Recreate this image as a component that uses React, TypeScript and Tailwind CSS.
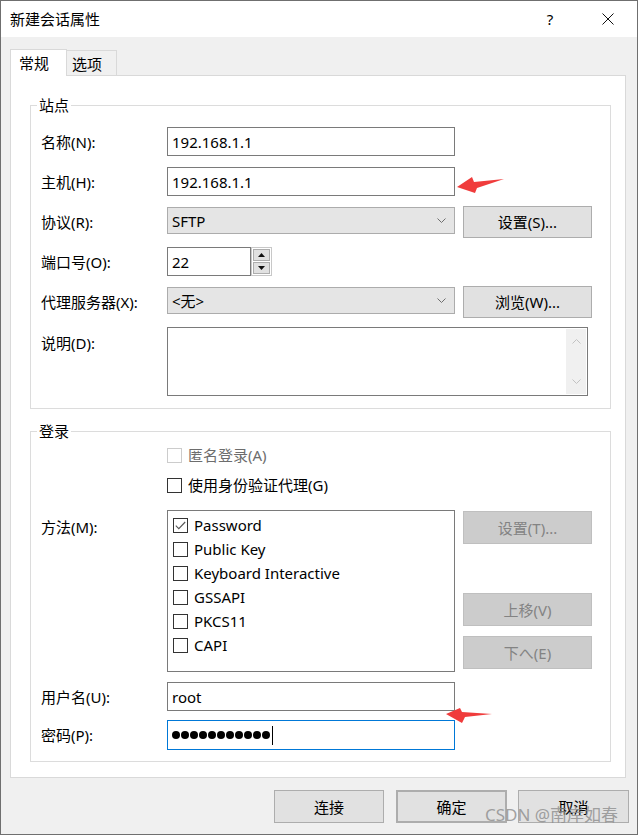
import React from 'react';

type BoxProps = { className?: string; children?: React.ReactNode };

const FieldLabel = ({ children, className = '' }: BoxProps) => (
  <div className={`w-[126px] shrink-0 ${className}`}>{children}</div>
);

const TextBox = ({ value, className = '' }: { value?: string; className?: string }) => (
  <div className={`w-[288px] h-[29px] border border-[#7a7a7a] bg-white flex items-center pl-[4px] ${className}`}>
    {value}
  </div>
);

const Chevron = ({ up = false, color = '#6e6e6e' }: { up?: boolean; color?: string }) => (
  <svg width="9" height="5" viewBox="0 0 9 5" className="block">
    <polyline
      points={up ? '0.5,4.5 4.5,0.5 8.5,4.5' : '0.5,0.5 4.5,4.5 8.5,0.5'}
      fill="none"
      stroke={color}
      strokeWidth="1"
    />
  </svg>
);

const ComboBox = ({ value }: { value: string }) => (
  <div className="self-start mt-[1px] w-[288px] h-[27px] border border-[#acacac] bg-[#e5e5e5] flex items-center pl-[4px] pr-[8px]">
    <span className="flex-1">{value}</span>
    <Chevron />
  </div>
);

const Button = ({
  children,
  className = '',
  disabled = false,
}: BoxProps & { disabled?: boolean }) => (
  <div
    className={`flex items-center justify-center border ${
      disabled ? 'bg-[#cccccc] border-[#bfbfbf] text-[#838383]' : 'bg-[#e1e1e1] border-[#adadad]'
    } ${className}`}
  >
    {children}
  </div>
);

const CheckBox = ({ checked = false, disabled = false }: { checked?: boolean; disabled?: boolean }) => (
  <div
    className={`w-[15px] h-[15px] shrink-0 border bg-white flex items-center justify-center ${
      disabled ? 'border-[#cccccc]' : 'border-[#333333]'
    }`}
  >
    {checked && (
      <svg width="11" height="9" viewBox="0 0 11 9">
        <polyline points="0.8,4.6 3.8,7.6 10.2,1" fill="none" stroke="#555555" strokeWidth="1.1" />
      </svg>
    )}
  </div>
);

const GroupBox = ({ title, children, className = '' }: BoxProps & { title: string }) => (
  <div className={`relative ml-[19px] w-[581px] border border-[#dcdcdc] pl-[10px] ${className}`}>
    <span className="absolute left-[6px] top-[-11px] px-[2px] bg-white">{title}</span>
    {children}
  </div>
);

const SpinArrow = ({ up }: { up?: boolean }) => (
  <svg width="7" height="4" viewBox="0 0 7 4">
    <polygon points={up ? '0,4 3.5,0 7,4' : '0,0 3.5,4 7,0'} fill="#111111" />
  </svg>
);

const methods = [
  { name: 'Password', checked: true },
  { name: 'Public Key', checked: false },
  { name: 'Keyboard Interactive', checked: false },
  { name: 'GSSAPI', checked: false },
  { name: 'PKCS11', checked: false },
  { name: 'CAPI', checked: false },
];

export default function App() {
  return (
    <div className="relative w-[638px] h-[835px] font-['Noto_Sans','Noto_Sans_CJK_SC',sans-serif] text-[15px] leading-[20px] text-black">
      <div className="h-full border border-[#6f6f6f] bg-[#f0f0f0] flex flex-col">
        {/* title bar */}
        <div className="h-[36px] shrink-0 bg-white flex items-center pl-[9px]">
          <span className="flex-1">新建会话属性</span>
          <div className="w-[46px] h-full flex items-center justify-center">?</div>
          <div className="w-[46px] h-full ml-[12px] mr-[6px] flex items-center justify-center">
            <svg width="12" height="12" viewBox="0 0 12 12">
              <path d="M0.5 0.5 L11.5 11.5 M11.5 0.5 L0.5 11.5" stroke="#111111" strokeWidth="1" />
            </svg>
          </div>
        </div>

        {/* tabs */}
        <div className="pt-[12px] pl-[9px] flex items-end h-[38px] shrink-0">
          <div className="relative z-10 w-[57px] h-[27px] mb-[-1px] bg-white border border-b-0 border-[#d9d9d9] flex items-center pl-[8px]">
            常规
          </div>
          <div className="w-[50px] h-[25px] border-t border-r border-[#d9d9d9] flex items-center pl-[5px] pt-[1px]">
            选项
          </div>
        </div>

        {/* tab page */}
        <div className="ml-[9px] w-[616px] h-[703px] shrink-0 bg-white border border-[#d9d9d9] pt-[29px]">
          <GroupBox title="站点" className="pt-[21px] pb-[12px]">
            <div className="flex items-center h-[29px] mb-[11px]">
              <FieldLabel>名称(N):</FieldLabel>
              <TextBox value="192.168.1.1" />
            </div>
            <div className="flex items-center h-[29px] mb-[10px]">
              <FieldLabel>主机(H):</FieldLabel>
              <TextBox value="192.168.1.1" />
            </div>
            <div className="flex items-center h-[32px] mb-[9px]">
              <FieldLabel>协议(R):</FieldLabel>
              <ComboBox value="SFTP" />
              <Button className="ml-[8px] w-[129px] h-[32px]">设置(S)...</Button>
            </div>
            <div className="flex items-center h-[29px] mb-[10px]">
              <FieldLabel>端口号(O):</FieldLabel>
              <div className="w-[84px] h-[29px] border border-[#7a7a7a] bg-white flex items-center pl-[4px]">22</div>
              <div className="w-[21px] h-[29px] border border-[#c8c8c8] bg-white flex flex-col p-[1px] gap-[1px]">
                <div className="flex-1 bg-[#e1e1e1] border border-[#adadad] flex items-center justify-center">
                  <SpinArrow up />
                </div>
                <div className="flex-1 bg-[#e1e1e1] border border-[#adadad] flex items-center justify-center">
                  <SpinArrow />
                </div>
              </div>
            </div>
            <div className="flex items-center h-[32px] mb-[9px]">
              <FieldLabel>代理服务器(X):</FieldLabel>
              <ComboBox value="<无>" />
              <Button className="ml-[8px] w-[129px] h-[32px]">浏览(W)...</Button>
            </div>
            <div className="flex items-start">
              <FieldLabel className="mt-[6px]">说明(D):</FieldLabel>
              <div className="w-[421px] h-[69px] border border-[#7a7a7a] bg-white flex justify-end p-[1px]">
                <div className="w-[20px] h-full bg-[#f0f0f0] flex flex-col items-center justify-between py-[10px]">
                  <Chevron up color="#c2c2c2" />
                  <Chevron color="#c2c2c2" />
                </div>
              </div>
            </div>
          </GroupBox>

          <GroupBox title="登录" className="mt-[22px] pt-[13px] pb-[11px]">
            <div className="flex items-center h-[20px] pl-[126px] gap-[6px] text-[#6d6d6d]">
              <CheckBox disabled />
              <span>匿名登录(A)</span>
            </div>
            <div className="flex items-center h-[20px] mt-[10px] pl-[126px] gap-[6px]">
              <CheckBox />
              <span>使用身份验证代理(G)</span>
            </div>
            <div className="flex items-start mt-[15px]">
              <FieldLabel className="mt-[7px]">方法(M):</FieldLabel>
              <div className="w-[288px] h-[162px] border border-[#7a7a7a] bg-white pt-[2px]">
                {methods.map((m) => (
                  <div key={m.name} className="h-[24px] flex items-center pl-[5px] gap-[6px]">
                    <CheckBox checked={m.checked} />
                    <span>{m.name}</span>
                  </div>
                ))}
              </div>
              <div className="ml-[8px] flex flex-col">
                <Button disabled className="mt-[1px] w-[129px] h-[33px]">设置(T)...</Button>
                <Button disabled className="mt-[49px] w-[129px] h-[33px]">上移(V)</Button>
                <Button disabled className="mt-[10px] w-[129px] h-[33px]">下へ(E)</Button>
              </div>
            </div>
            <div className="flex items-center h-[29px] mt-[10px]">
              <FieldLabel>用户名(U):</FieldLabel>
              <TextBox value="root" />
            </div>
            <div className="flex items-center h-[30px] mt-[9px]">
              <FieldLabel>密码(P):</FieldLabel>
              <div className="w-[288px] h-[30px] border border-[#0078d7] bg-white flex items-center pl-[4px] gap-[1px]">
                {Array.from({ length: 11 }).map((_, i) => (
                  <span key={i} className="w-[8px] h-[8px] rounded-full bg-black" />
                ))}
                <span className="ml-[1px] w-[1px] h-[19px] bg-black" />
              </div>
            </div>
          </GroupBox>
        </div>

        {/* dialog buttons */}
        <div className="mt-[12px] pr-[8px] flex justify-end">
          <Button className="w-[110px] h-[33px]">连接</Button>
          <Button className="ml-[12px] w-[111px] h-[33px] border-2 border-[#0078d7]">确定</Button>
          <Button className="ml-[11px] w-[111px] h-[33px]">取消</Button>
        </div>
      </div>

      {/* red callout arrows */}
      <svg className="absolute left-0 top-0 pointer-events-none" width="638" height="835" viewBox="0 0 638 835">
        <polygon points="457,187 472,177 474,182 504,179 477,188 475,193" fill="#f03c3c" />
        <polygon points="446,714 460,708 462,712 492,714 465,717 462,723" fill="#f03c3c" />
      </svg>

      <span className="absolute left-[485px] top-[804px] text-[17px] leading-[22px] text-[#8c8c8c]/80 pointer-events-none">
        CSDN @南岸如春
      </span>
    </div>
  );
}
